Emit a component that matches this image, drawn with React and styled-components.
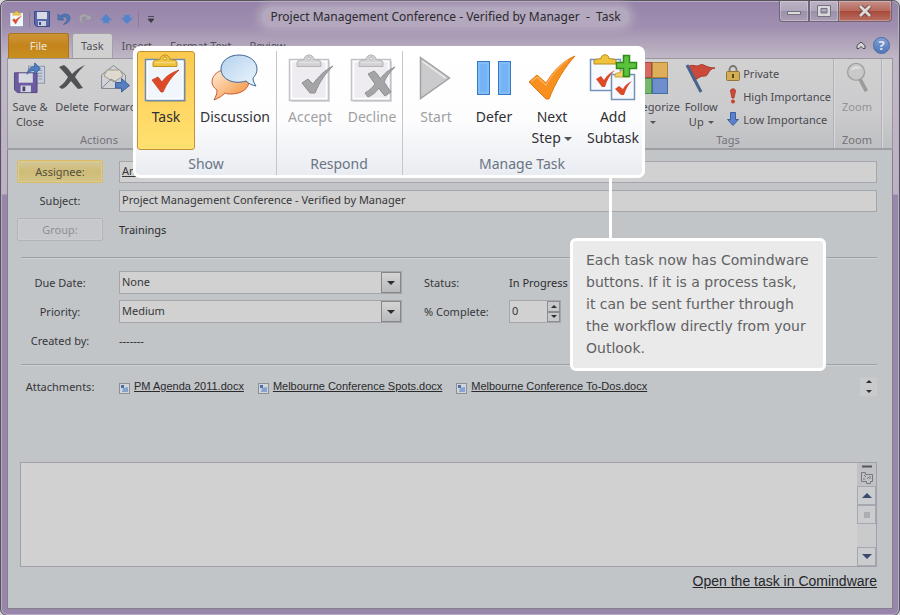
import React, { useState } from "react";
import styled, { createGlobalStyle } from "styled-components";

const attachments = [
  "PM Agenda 2011.docx",
  "Melbourne Conference Spots.docx",
  "Melbourne Conference To-Dos.docx",
];

/* ---------- icons ---------- */

function Clipboard({ gray, children, size = 48 }) {
  const edge = gray ? "#c4c2c8" : "#6d8cb4";
  const paper = gray ? "#eeebf1" : "#f1f6fd";
  const clip = gray ? "#d2d2d4" : "#f0c33c";
  const clipEdge = gray ? "#b4b4b6" : "#c0921f";
  return (
    <svg width={size} height={size} viewBox="0 0 48 48" aria-hidden="true">
      <rect x="5" y="7" width="39" height="41" fill="#00000022" />
      <rect x="3.500" y="5.500" width="39" height="41" fill={paper} stroke={edge} strokeWidth="1.500" />
      <rect x="5.500" y="7.500" width="35" height="37" fill="none" stroke="#fff" strokeWidth="1.500" />
      <path
        d="M11 9c0-3 4-3 7-3.500c0-6 10-6 10 0c4 .5 7 .5 7 3.500v3.500h-24z"
        fill={clip}
        stroke={clipEdge}
      />
      <path d="M13 8.500h20" stroke="#fff" strokeOpacity=".35" strokeWidth="1.500" />
      <circle cx="23" cy="4.500" r="1.500" fill={gray ? "#f2f2f2" : "#fff6cc"} stroke={clipEdge} />
      {children}
    </svg>
  );
}

const TaskIcon = ({ size }) => (
  <Clipboard size={size}>
    <path
      d="M10 26l6-3 4 5c4-6 9-9 17-12c-7 6-12 13-16 22h-2z"
      fill="#dc4a28"
      stroke="#c73c1e"
      strokeWidth=".8"
    />
  </Clipboard>
);

const AcceptIcon = () => (
  <Clipboard gray>
    <path
      d="M16 29l6-4 5 5c6-8 12-14 20-18c-8 8-13 15-18 27h-5z"
      fill="#a5a5a7"
      stroke="#8f8f91"
    />
  </Clipboard>
);

const DeclineIcon = () => (
  <Clipboard gray>
    <path
      d="M20 20l6-3c3 2 5 5 6 8c4-5 8-9 15-12c-5 5-9 10-11 15l7 10-6 4c-3-3-5-6-6-8c-3 4-6 7-11 9l-3-4c5-3 8-6 10-9z"
      fill="#a5a5a7"
      stroke="#8f8f91"
    />
  </Clipboard>
);

const DiscussionIcon = () => (
  <svg width="48" height="48" viewBox="0 0 48 48" aria-hidden="true">
    <defs>
      <linearGradient id="talkBlue" x2="1" y2="1">
        <stop offset="0" stopColor="#b4d2ee" />
        <stop offset="1" stopColor="#edf5fc" />
      </linearGradient>
      <linearGradient id="talkOrange" x2="1" y2="1">
        <stop offset="0" stopColor="#fff0e0" />
        <stop offset="1" stopColor="#f48a2c" />
      </linearGradient>
    </defs>
    <path
      d="M1 28c0-8 8-13 18-13s19 4 19 12-8 13-18 13c-2 0-4 0-6-1c-3 3-6 5-11 7c2-4 3-6 3-10c-3-2-5-5-5-8z"
      fill="url(#talkOrange)"
      stroke="#cc5a38"
    />
    <path
      d="M10 15c0-8 8-14 18-14s18 6 18 14c0 4-2 7-4 9c0 3 1 5 3 8c-4-1-7-2-10-5c-13 4-25-2-25-12z"
      fill="url(#talkBlue)"
      stroke="#3f6796"
    />
  </svg>
);

const StartIcon = () => (
  <svg width="48" height="48" viewBox="0 0 48 48" aria-hidden="true">
    <path d="M8.500 3.500l29 20.500-29 20.500z" fill="#cbcbcd" stroke="#a2a2a4" strokeWidth="1.500" />
    <path d="M10.500 7.500l23 16.500" stroke="#ededed" strokeWidth="1.500" />
  </svg>
);

const DeferIcon = () => (
  <svg width="48" height="48" viewBox="0 0 48 48" aria-hidden="true">
    {[7, 28].map((x) => (
      <g key={x}>
        <rect x={x + 0.5} y="7.500" width="12" height="33" fill="#74b4f4" stroke="#3879c4" />
        <rect x={x + 2} y="9" width="9" height="30" fill="none" stroke="#8fc5fa" />
      </g>
    ))}
  </svg>
);

const NextStepIcon = () => (
  <svg width="48" height="48" viewBox="0 0 48 48" aria-hidden="true">
    <path d="M1 28l8-7 9 8c8-13 17-22 29-27c-10 11-19 25-26 43h-3z" fill="#f7901e" stroke="#df780c" />
    <path d="M3 28l6-5 9 8c6-11 13-19 22-25" fill="none" stroke="#fcae58" strokeWidth="1.500" />
  </svg>
);

const SubtaskIcon = () => (
  <svg width="50" height="48" viewBox="0 0 50 48" aria-hidden="true">
    <rect x="2.500" y="5.500" width="30" height="31" fill="#f6f9fe" stroke="#7492b8" strokeWidth="1.500" />
    <path d="M6 7c0-2 4-2 7-2.500c0-5 8-5 8 0c4 .5 7 .5 7 2.500v3h-22z" fill="#f0c33c" stroke="#b98a1c" />
    <path d="M8 25l5-3 3 4c3-5 7-8 11-10c-5 5-8 10-10 17h-3z" fill="#dc4a28" />
    <rect x="23.500" y="20.500" width="23" height="25" fill="#f6f9fe" stroke="#7492b8" strokeWidth="1.500" />
    <path d="M27 21c0-2 3-2 5-2.500c0-3 5-3 5 0l4 2.500v2h-14z" fill="#f3cf69" stroke="#c7a040" />
    <path d="M27 35l4-3 4 3c2-4 5-6 9-8c-4 4-6 8-8 14h-3z" fill="#dc4a28" />
    <path
      d="M35.500 1.500h6v7h7v6h-7v8h-6v-8h-7v-6h7z"
      fill="#5cc13c"
      stroke="#2d8a1c"
      strokeWidth="1.500"
    />
  </svg>
);

const SaveCloseIcon = () => (
  <svg width="34" height="32" viewBox="0 0 34 34" aria-hidden="true">
    <rect x="15.500" y="4.500" width="17" height="18" fill="#c8cfdb" stroke="#8592ac" />
    <path d="M24 9h6M24 12h6M24 15h6M26 18h4" stroke="#8592ac" />
    <path d="M.5 11.500h24v21h-21l-3-3z" fill="#6c5ba0" stroke="#53447f" />
    <rect x="5" y="12" width="15" height="10" fill="#d6d8e2" />
    <path d="M7 25h11v7h-11z" fill="#d4d6e0" />
    <rect x="9" y="26" width="3" height="5" fill="#4c4270" />
    <path d="M14 13c1-6 4-8 8-8v-4l6 6-6 6v-4c-4 0-6 1-8 4z" fill="#4f7fc4" stroke="#3b63a0" />
  </svg>
);

const DeleteIcon = () => (
  <svg width="32" height="32" viewBox="0 0 32 32" aria-hidden="true">
    <path
      d="M3 5l5-2c4 3 6 6 8 9c4-4 8-7 13-9c-4 4-8 8-10 12c3 4 5 7 8 11l-5 1c-3-3-5-6-7-8c-3 4-6 7-9 8l-3-2c4-3 7-6 9-10c-3-4-6-7-9-10z"
      fill="#505256"
    />
  </svg>
);

const ForwardIcon = () => (
  <svg width="32" height="32" viewBox="0 0 32 32" aria-hidden="true">
    <path d="M2.500 13l12-9.500 12 9.500v13.500h-24z" fill="#d0d2d6" stroke="#858b95" />
    <path d="M5 14l3-6h13l3 6-9 6z" fill="#dedad0" stroke="#a29b8b" />
    <path d="M3 26l9-9 5 3 9 6" fill="none" stroke="#858b95" />
    <path d="M16.500 20.500h6v-4l8 7-8 6.500v-4h-6z" fill="#567fc0" stroke="#3c609c" />
  </svg>
);

const CategorizeIcon = () => (
  <svg width="32" height="32" viewBox="0 0 32 32" aria-hidden="true">
    <rect x=".5" y=".5" width="15" height="15" fill="#d56a60" stroke="#a84840" />
    <rect x="16.500" y=".5" width="15" height="15" fill="#dfae58" stroke="#b0843a" />
    <rect x=".5" y="16.500" width="15" height="15" fill="#75b86e" stroke="#4d9048" />
    <rect x="16.500" y="16.500" width="15" height="15" fill="#6e8fcc" stroke="#456ca8" />
  </svg>
);

const FlagIcon = () => (
  <svg width="32" height="32" viewBox="0 0 32 32" aria-hidden="true">
    <path d="M3 5c5-4 7 1 12-2c4-2 5 3 15 3c-8 1-6 9-11 8c-4 0-6 2-10 5z" fill="#cc4a3a" stroke="#a8382c" />
    <path d="M2 3l14 27" stroke="#47638a" strokeWidth="3" />
  </svg>
);

const MagnifierIcon = () => (
  <svg width="32" height="32" viewBox="0 0 32 34" aria-hidden="true">
    <path d="M19 18l7 13" stroke="#9b9b9b" strokeWidth="4" />
    <circle cx="15" cy="10.500" r="9" fill="#c9c9c9" stroke="#a0a0a0" strokeWidth="1.500" />
    <path d="M9 9c2-5 8-6 12-2c-4 0-8 1-12 2z" fill="#dedede" />
  </svg>
);

const LockIcon = () => (
  <svg width="14" height="16" viewBox="0 0 14 16" aria-hidden="true">
    <path d="M3.500 8v-3.500a3.500 3.500 0 0 1 7 0v3.500" fill="none" stroke="#77756e" strokeWidth="1.800" />
    <rect x=".5" y="6.500" width="13" height="9" rx="1" fill="#d2ae55" stroke="#94743a" />
    <path d="M7 9v4" stroke="#5c4820" strokeWidth="2" />
  </svg>
);

const HighIcon = () => (
  <svg width="14" height="16" viewBox="0 0 14 16" aria-hidden="true">
    <path d="M4.500 3c0-3 5-3 5 0l-1.500 7h-2z" fill="#d04a38" stroke="#a63426" strokeWidth=".8" />
    <circle cx="7" cy="13.500" r="2" fill="#c8402e" />
  </svg>
);

const LowIcon = () => (
  <svg width="14" height="16" viewBox="0 0 14 16" aria-hidden="true">
    <path d="M4.500 1.500h5v7h3l-5.500 6-5.500-6h3z" fill="#5a82cc" stroke="#3c5f9e" />
  </svg>
);

const DiskIcon = () => (
  <svg width="16" height="16" viewBox="0 0 16 16" aria-hidden="true">
    <path d="M.5 .5h15v15h-13l-2-2z" fill="#5868a8" stroke="#3d4c86" />
    <rect x="3" y="1" width="10" height="7" fill="#d8dbe6" />
    <path d="M4 10h8v5h-8z" fill="#ccd0de" />
    <path d="M5 11h2v3h-2z" fill="#3d4c86" />
  </svg>
);

const CurvedArrow = ({ color, edge, flip }) => (
  <svg width="14" height="14" viewBox="0 0 14 14" aria-hidden="true">
    <g transform={flip ? "translate(14 0) scale(-1 1)" : undefined}>
      <path
        d="M1 2v6h6l-2-2.300c2.500-1.700 5-.7 5 1.300 0 2-1.500 3.500-3.500 5.500 4.500-1 6.500-3.500 6.500-6.500 0-4-6-5.500-9.500-2z"
        fill={color}
        stroke={edge}
        strokeWidth=".6"
      />
    </g>
  </svg>
);

const BlockArrow = ({ down }) => (
  <svg width="14" height="14" viewBox="0 0 14 14" aria-hidden="true">
    <path
      transform={down ? "rotate(180 7 7)" : undefined}
      d="M7 2l6 6h-3v3h-6v-3h-3z"
      fill="#5682ca"
      stroke="#6d8fc8"
      strokeWidth=".6"
    />
  </svg>
);

const DocIcon = () => (
  <svg width="11" height="11" viewBox="0 0 11 11" aria-hidden="true">
    <rect x=".5" y=".5" width="10" height="10" fill="#d2d5da" stroke="#8c8f96" />
    <path d="M2 2h3v3h-3z" fill="#4a6ca8" />
    <path d="M4 5l5-1v5h-6z" fill="#84a4cf" />
  </svg>
);

const Caret = ({ up, size = 8, color = "#2e2e2e" }) => (
  <svg width={size} height={size / 2} viewBox="0 0 8 4" aria-hidden="true">
    <path d={up ? "M0 4l4-4 4 4z" : "M0 0h8l-4 4z"} fill={color} />
  </svg>
);

/* ---------- app ---------- */

export default function App() {
  const [subject, setSubject] = useState("Project Management Conference - Verified by Manager");
  const [complete, setComplete] = useState(0);

  return (
    <>
      <GlobalStyle />
      <Window>
        <TitleBar>
          <QuickBar>
            <QuickButton aria-label="Task"><TaskIcon size={16} /></QuickButton>
            <QuickDivider />
            <QuickButton aria-label="Save"><DiskIcon /></QuickButton>
            <QuickButton aria-label="Undo"><CurvedArrow color="#4f77b6" edge="#3b5e96" /></QuickButton>
            <QuickButton aria-label="Redo"><CurvedArrow flip color="#a5a5aa" edge="#8d8d92" /></QuickButton>
            <QuickButton aria-label="Previous item"><BlockArrow /></QuickButton>
            <QuickButton aria-label="Next item"><BlockArrow down /></QuickButton>
            <QuickDivider />
            <QuickButton aria-label="Customize">
              <svg width="8" height="8" viewBox="0 0 8 8" aria-hidden="true">
                <path d="M1 1.500h6M1 4h6l-3 3.500z" fill="#3b3b40" stroke="#3b3b40" strokeWidth=".8" />
              </svg>
            </QuickButton>
          </QuickBar>
          <Title>Project Management Conference - Verified by Manager&nbsp; - &nbsp;Task</Title>
          <WindowButtons>
            <WindowButton aria-label="Minimize">
              <svg width="14" height="10" viewBox="0 0 14 10" aria-hidden="true">
                <rect x=".5" y="5.500" width="13" height="3" fill="#dcdcdc" stroke="#77707e" />
              </svg>
            </WindowButton>
            <WindowButton aria-label="Maximize">
              <svg width="14" height="12" viewBox="0 0 14 12" aria-hidden="true">
                <path
                  d="M.5 .5h13v11h-13zM4 3.500h6v4.500h-6z"
                  fillRule="evenodd"
                  fill="#d8d8d8"
                  stroke="#77707e"
                />
              </svg>
            </WindowButton>
            <WindowButton $close aria-label="Close">
              <svg width="14" height="12" viewBox="0 0 14 12" aria-hidden="true">
                <path d="M2 1l10 10M12 1l-10 10" stroke="#6e4644" strokeWidth="4.500" />
                <path d="M2 1l10 10M12 1l-10 10" stroke="#dedada" strokeWidth="2.800" />
              </svg>
            </WindowButton>
          </WindowButtons>
        </TitleBar>

        <TabBar>
          <FileTab>File</FileTab>
          <Tab $active>Task</Tab>
          <Tab>Insert</Tab>
          <Tab>Format Text</Tab>
          <Tab>Review</Tab>
          <TabTools>
            <PlainButton aria-label="Collapse ribbon">
              <svg width="10" height="9" viewBox="0 0 10 9" aria-hidden="true">
                <path
                  d="M1 4.500l4-3.500 4 3.500v3h-2l-2-2-2 2h-2z"
                  fill="#d8d6da"
                  stroke="#4a4a4e"
                />
              </svg>
            </PlainButton>
            <HelpButton aria-label="Help">?</HelpButton>
          </TabTools>
        </TabBar>

        <Ribbon>
          <Group>
            <GroupItems>
              <RibbonButton $width={44}><SaveCloseIcon /><span>Save &amp;</span><span>Close</span></RibbonButton>
              <RibbonButton $width={40}><DeleteIcon /><span>Delete</span></RibbonButton>
              <RibbonButton $width={46}><ForwardIcon /><span>Forward</span></RibbonButton>
            </GroupItems>
            <GroupName $shift>Actions</GroupName>
          </Group>
          <Group $last>
            <GroupItems>
              <RibbonButton $width={56}>
                <CategorizeIcon />
                <span>Categorize</span>
                <span><Caret size={6} color="#555" /></span>
              </RibbonButton>
              <RibbonButton $width={42}>
                <FlagIcon />
                <span>Follow</span>
                <span>Up <Caret size={6} color="#555" /></span>
              </RibbonButton>
              <TagList>
                <TagButton><LockIcon />Private</TagButton>
                <TagButton><HighIcon />High Importance</TagButton>
                <TagButton><LowIcon />Low Importance</TagButton>
              </TagList>
            </GroupItems>
            <GroupName>Tags</GroupName>
          </Group>
          <Group>
            <GroupItems>
              <RibbonButton $width={46} disabled><MagnifierIcon /><span>Zoom</span></RibbonButton>
            </GroupItems>
            <GroupName>Zoom</GroupName>
          </Group>
          <RibbonEnd />
        </Ribbon>

        <Form>
          <Row>
            <FieldButton $hot>Assignee:</FieldButton>
            <TextField aria-label="Assignee" defaultValue="An" $link />
          </Row>
          <Row>
            <Label htmlFor="subject">Subject:</Label>
            <TextField id="subject" value={subject} onChange={(e) => setSubject(e.target.value)} />
          </Row>
          <Row>
            <FieldButton disabled>Group:</FieldButton>
            <Value>Trainings</Value>
          </Row>

          <Divider />

          <Row>
            <Label htmlFor="due">Due Date:</Label>
            <SelectBox>
              <select id="due"><option>None</option></select>
              <DropArrow><Caret size={8} /></DropArrow>
            </SelectBox>
            <SideLabel>Status:</SideLabel>
            <Value>In Progress</Value>
          </Row>
          <Row>
            <Label htmlFor="priority">Priority:</Label>
            <SelectBox>
              <select id="priority"><option>Medium</option></select>
              <DropArrow><Caret size={8} /></DropArrow>
            </SelectBox>
            <SideLabel as="label" htmlFor="complete">% Complete:</SideLabel>
            <Spinner>
              <input id="complete" value={complete} onChange={(e) => setComplete(e.target.value)} />
              <SpinButtons>
                <button aria-label="Increase" onClick={() => setComplete(Number(complete) + 25)}>
                  <Caret up size={6} />
                </button>
                <button aria-label="Decrease" onClick={() => setComplete(Number(complete) - 25)}>
                  <Caret size={6} />
                </button>
              </SpinButtons>
            </Spinner>
          </Row>
          <Row>
            <Label as="span">Created by:</Label>
            <Value>-------</Value>
          </Row>

          <Divider $tight />

          <Row>
            <Label as="span">Attachments:</Label>
            <Files>
              {attachments.map((name) => (
                <FileLink href="#" key={name}>
                  <DocIcon />
                  <span>{name}</span>
                </FileLink>
              ))}
            </Files>
            <FileScroll>
              <PlainButton aria-label="Scroll up"><Caret up size={6} /></PlainButton>
              <PlainButton aria-label="Scroll down"><Caret size={6} /></PlainButton>
            </FileScroll>
          </Row>

          <Editor>
            <textarea aria-label="Notes" />
            <Scrollbar>
              <RulerToggle aria-label="Ruler">
                <svg width="14" height="19" viewBox="0 0 14 19" aria-hidden="true">
                  <path d="M2 1.500h10" stroke="#55555c" strokeWidth="2" />
                  <path
                    d="M1.500 7.500h4v2h7v7h-2v2h-4v-2h-5zM4 10l2 2M9 12l-2 2M10 11v3M4 13v2"
                    fill="none"
                    stroke="#77777e"
                  />
                </svg>
              </RulerToggle>
              <ScrollButton aria-label="Up"><Caret up size={10} color="#3d4a70" /></ScrollButton>
              <ScrollButton aria-label="Thumb">
                <svg width="6" height="6" viewBox="0 0 6 6" aria-hidden="true">
                  <path d="M0 1h6M0 3h6M0 5h6" stroke="#8e9094" />
                </svg>
              </ScrollButton>
              <ScrollTrack />
              <ScrollButton aria-label="Down"><Caret size={10} color="#3d4a70" /></ScrollButton>
            </Scrollbar>
          </Editor>

          <OpenLink href="#">Open the task in Comindware</OpenLink>
        </Form>

        <Spotlight>
          <SpotGroup>
            <SpotItems>
              <SpotButton $width={58} $active><TaskIcon /><span>Task</span></SpotButton>
              <SpotButton $width={80}><DiscussionIcon /><span>Discussion</span></SpotButton>
            </SpotItems>
            <SpotName>Show</SpotName>
          </SpotGroup>
          <SpotGroup>
            <SpotItems>
              <SpotButton $width={66} disabled><AcceptIcon /><span>Accept</span></SpotButton>
              <SpotButton $width={58} disabled><DeclineIcon /><span>Decline</span></SpotButton>
            </SpotItems>
            <SpotName>Respond</SpotName>
          </SpotGroup>
          <SpotGroup>
            <SpotItems>
              <SpotButton $width={66} disabled><StartIcon /><span>Start</span></SpotButton>
              <SpotButton $width={50}><DeferIcon /><span>Defer</span></SpotButton>
              <SpotButton $width={66}>
                <NextStepIcon />
                <span>Next</span>
                <span>Step <Caret size={8} color="#555" /></span>
              </SpotButton>
              <SpotButton $width={56}><SubtaskIcon /><span>Add</span><span>Subtask</span></SpotButton>
            </SpotItems>
            <SpotName>Manage Task</SpotName>
          </SpotGroup>
          <Balloon>
            Each task now has Comindware buttons. If it is a process task, it can be sent further
            through the workflow directly from your Outlook.
          </Balloon>
        </Spotlight>
      </Window>
    </>
  );
}

const GlobalStyle = createGlobalStyle`
  * {
    box-sizing: border-box;
  }

  body {
    margin: 0;
    background: #d8d8d8;
    font-family: "Noto Sans", "Open Sans", sans-serif;
    font-size: 11px;
    line-height: 15px;
    color: #37373a;
  }

  button, input, select, textarea {
    font: inherit;
    color: inherit;
    margin: 0;
    padding: 0;
    border: 0;
    border-radius: 0;
    background: none;
  }

  svg {
    flex: none;
  }
`;

const Window = styled.div`
  position: relative;
  display: flex;
  flex-direction: column;
  min-height: 100vh;
  padding: 0 6px 6px;
  border: 1px solid #56535a;
  border-radius: 7px;
  box-shadow: inset 0 0 0 1px #b9adc4;
  background: linear-gradient(
    #9583a9 0,
    #a08fb0 26px,
    #b5aabd 46px,
    #c0b8c7 58px,
    #bdb1c6 193px,
    #9886ad 194px
  );
`;

const TitleBar = styled.header`
  display: flex;
  justify-content: space-between;
  height: 32px;
`;

const QuickBar = styled.div`
  display: flex;
  align-items: center;
  flex: 1;
  gap: 6px;
  padding: 4px 0 0 2px;
`;

const PlainButton = styled.button`
  display: flex;
  align-items: center;
  justify-content: center;
`;

const QuickButton = styled(PlainButton)`
  min-width: 15px;
  height: 16px;
`;

const QuickDivider = styled.span`
  width: 1px;
  height: 16px;
  margin: 0 -2px;
  background: #8a7c98;
`;

const Title = styled.h1`
  margin: 6px 10px 0 0;
  padding: 0 8px;
  height: 20px;
  border-radius: 10px;
  background: #b3a8bd;
  box-shadow: 0 0 8px 4px #b3a8bd;
  font-size: 12px;
  font-weight: 400;
  line-height: 20px;
  white-space: nowrap;
  color: #2c2a30;
`;

const WindowButtons = styled.div`
  display: flex;
  align-items: flex-start;
  justify-content: flex-end;
  flex: 1;
  padding-right: 1px;
`;

const WindowButton = styled(PlainButton)`
  width: ${({ $close }) => ($close ? 53 : 30)}px;
  height: 21px;
  border: 1px solid #6f6578;
  border-top: 0;
  border-left-width: ${({ $close }) => ($close ? 0 : 1)}px;
  border-radius: ${({ $close }) => ($close ? "0 0 4px 0" : "0")};
  box-shadow: inset 0 0 0 1px #ffffff44;
  background: ${({ $close }) =>
    $close
      ? "linear-gradient(#c49089, #b8685c 48%, #a84a3c 52%, #b96e60)"
      : "linear-gradient(#bcb2c4, #b0a5ba 48%, #9d90aa 52%, #aa9fb5)"};

  &:first-child {
    border-radius: 0 0 0 4px;
  }
`;

const TabBar = styled.nav`
  display: flex;
  align-items: stretch;
  height: 25px;
`;

const Tab = styled.button`
  padding: 0 8px 2px;
  border: 1px solid ${({ $active }) => ($active ? "#a3a0a8" : "transparent")};
  border-bottom: 0;
  border-radius: 3px 3px 0 0;
  background: ${({ $active }) => ($active ? "#d0d0d1" : "none")};
  color: #515156;
`;

const FileTab = styled(Tab)`
  width: 61px;
  margin: 0 3px 0 1px;
  border-color: #a8741c;
  background: linear-gradient(#cc9436, #c4841c 50%, #c8901f);
  color: #ebe4d8;
`;

const TabTools = styled.div`
  display: flex;
  align-items: center;
  gap: 7px;
  margin-left: auto;
  padding-right: 3px;
`;

const HelpButton = styled(PlainButton)`
  width: 17px;
  height: 17px;
  border: 1px solid #4a6aa4;
  border-radius: 50%;
  background: linear-gradient(#7f9fd4, #4f77b8);
  color: #e4e8ee;
  font-size: 13px;
  font-weight: 700;
`;

const Ribbon = styled.section`
  display: flex;
  height: 92px;
  border: 1px solid #98959c;
  border-bottom: 2px solid #9c9ea2;
  background: linear-gradient(#d1d1d2, #cbcbcd 60%, #bfc0c3);
  color: #4a4a4e;
`;

const Group = styled.div`
  display: flex;
  flex-direction: column;
  justify-content: space-between;
  margin-left: ${({ $last }) => ($last ? "auto" : "0")};
  padding: 3px 1px 0 0;
  border-right: 1px solid #b2b2b6;
  box-shadow: 1px 0 0 #d8d8da;
`;

const GroupItems = styled.div`
  display: flex;
`;

const RibbonButton = styled.button`
  display: flex;
  flex-direction: column;
  align-items: center;
  width: ${({ $width }) => $width}px;
  white-space: nowrap;
  color: ${({ disabled }) => (disabled ? "#929295" : "inherit")};

  svg {
    margin-bottom: 5px;
  }

  span svg {
    margin: 0 0 2px 1px;
  }
`;

const GroupName = styled.div`
  padding: 0 0 1px ${({ $shift }) => ($shift ? 52 : 0)}px;
  text-align: center;
  color: #727278;
`;

const RibbonEnd = styled.div`
  width: 10px;
`;

const TagList = styled.div`
  display: flex;
  flex-direction: column;
  gap: 7px;
  padding: 3px 1px 0 4px;
`;

const TagButton = styled.button`
  display: flex;
  align-items: center;
  gap: 3px;
  height: 16px;
  white-space: nowrap;
`;

const Form = styled.main`
  display: flex;
  flex-direction: column;
  flex: 1;
  gap: 6px;
  padding: 10px 15px 19px 9px;
  border: 1px solid #85808c;
  border-top: 0;
  background: #c1c5c8;
`;

const Row = styled.div`
  display: flex;
  align-items: center;
  min-height: 23px;
`;

const Label = styled.label`
  width: 86px;
  margin-right: 16px;
  text-align: center;
`;

const FieldButton = styled.button`
  width: 86px;
  height: 23px;
  margin-right: 16px;
  border: 1px solid ${({ $hot }) => ($hot ? "#d9bb68" : "#b3b4b9")};
  border-radius: 2px;
  background: ${({ $hot }) => ($hot ? "linear-gradient(#d3c79a, #cfbc77 50%, #d2c487)" : "#c6c8cb")};
  box-shadow: inset 0 0 0 1px ${({ $hot }) => ($hot ? "#dccb90" : "#cbcdd0")};
  color: ${({ $hot }) => ($hot ? "#54503f" : "#8e9094")};
`;

const TextField = styled.input`
  flex: 1;
  min-width: 0;
  height: 22px;
  padding: 0 2px 3px;
  border: 1px solid #a4a6ac;
  background: #d1d1d1;
  text-decoration: ${({ $link }) => ($link ? "underline" : "none")};
`;

const Value = styled.span`
  color: #2c2c2e;
`;

const Divider = styled.hr`
  width: calc(100% - 4px);
  height: 2px;
  margin: ${({ $tight }) => ($tight ? "6px 0 3px 4px" : "10px 0 6px 4px")};
  border: 0;
  border-top: 1px solid #9d9fa3;
  border-bottom: 1px solid #cfd1d3;
`;

const SelectBox = styled.div`
  display: flex;
  width: 283px;
  height: 23px;
  border: 1px solid #a4a6ac;
  background: #d1d1d1;

  select {
    flex: 1;
    padding: 0 0 2px 2px;
    appearance: none;
  }
`;

const DropArrow = styled.span`
  display: flex;
  align-items: center;
  justify-content: center;
  width: 20px;
  border: 1px solid #85878b;
  background: linear-gradient(#d4d4d4, #b9babc);
  pointer-events: none;
`;

const SideLabel = styled.span`
  width: 85px;
  margin-left: 22px;
`;

const Spinner = styled.div`
  display: flex;
  width: 52px;
  height: 23px;
  border: 1px solid #a4a6ac;
  background: #d1d1d1;

  input {
    flex: 1;
    min-width: 0;
    padding: 0 0 2px 2px;
  }
`;

const SpinButtons = styled.div`
  display: flex;
  flex-direction: column;
  width: 13px;

  button {
    display: flex;
    flex: 1;
    align-items: center;
    justify-content: center;
    border: 1px solid #8b8d90;
    background: #c8c9ca;
  }
`;

const Files = styled.div`
  display: flex;
  flex-wrap: wrap;
  flex: 1;
  gap: 14px;
`;

const FileLink = styled.a`
  display: flex;
  align-items: flex-start;
  gap: 4px;
  font: 11px/14px "Liberation Sans", Arial, sans-serif;
  color: #2a2a2c;

  svg {
    margin-top: 4px;
  }
`;

const FileScroll = styled.div`
  display: flex;
  flex-direction: column;
  justify-content: space-around;
  width: 17px;
  height: 19px;
  background: #c9cacb;
`;

const Editor = styled.div`
  display: flex;
  flex: 1;
  min-height: 105px;
  margin: 58px 0 0 3px;
  border: 1px solid #a19fac;

  textarea {
    flex: 1;
    resize: none;
    background: #d1d1d1;
  }
`;

const Scrollbar = styled.div`
  display: flex;
  flex-direction: column;
  width: 19px;
  background: #c9cacb;
`;

const RulerToggle = styled(PlainButton)`
  height: 23px;
  background: #bfc1c4;
`;

const ScrollButton = styled(PlainButton)`
  height: 19px;
  border: 1px solid #a5a8ae;
  background: #cbccce;
`;

const ScrollTrack = styled.div`
  flex: 1;
`;

const OpenLink = styled.a`
  align-self: flex-end;
  font: 14px/16px "Liberation Sans", Arial, sans-serif;
  color: #262628;
`;

const Spotlight = styled.section`
  position: absolute;
  top: 45px;
  left: 132px;
  display: flex;
  height: 132px;
  padding: 2px 0 0 1px;
  border: 3px solid #fff;
  border-radius: 7px;
  background: linear-gradient(#fff 0, #fdfdfe 55%, #e9ecf1 100%);
`;

const SpotGroup = styled.div`
  display: flex;
  flex-direction: column;
  justify-content: space-between;
  padding-right: 1px;
  border-right: 1px solid #c3c6cc;

  &:nth-child(3) {
    border-right: 0;
  }
`;

const SpotItems = styled.div`
  display: flex;
`;

const SpotButton = styled.button`
  display: flex;
  flex-direction: column;
  align-items: center;
  width: ${({ $width }) => $width}px;
  height: 99px;
  padding-top: 2px;
  border: 1px solid ${({ $active }) => ($active ? "#bf9438" : "transparent")};
  border-radius: 3px;
  background: ${({ $active }) =>
    $active ? "linear-gradient(#fbc94e, #ffd562 50%, #ffe170)" : "none"};
  color: ${({ disabled }) => (disabled ? "#a0a0a2" : "#303034")};
  font-size: 14px;
  line-height: 21px;
  white-space: nowrap;

  svg {
    margin-bottom: 4px;
  }

  span svg {
    margin-bottom: 2px;
  }
`;

const SpotName = styled.div`
  padding-bottom: 1px;
  text-align: center;
  font-size: 14px;
  line-height: 20px;
  color: #6b7484;
`;

const Balloon = styled.p`
  position: absolute;
  top: 189px;
  left: 434px;
  width: 256px;
  margin: 0;
  padding: 8px 13px 9px;
  border: 3px solid #fff;
  border-radius: 6px;
  background: #eaeaea;
  font: 14px/22px "DejaVu Sans", Verdana, sans-serif;
  color: #626264;

  &::before {
    content: "";
    position: absolute;
    bottom: 100%;
    left: 36px;
    width: 3px;
    height: 64px;
    background: #fff;
  }
`;
